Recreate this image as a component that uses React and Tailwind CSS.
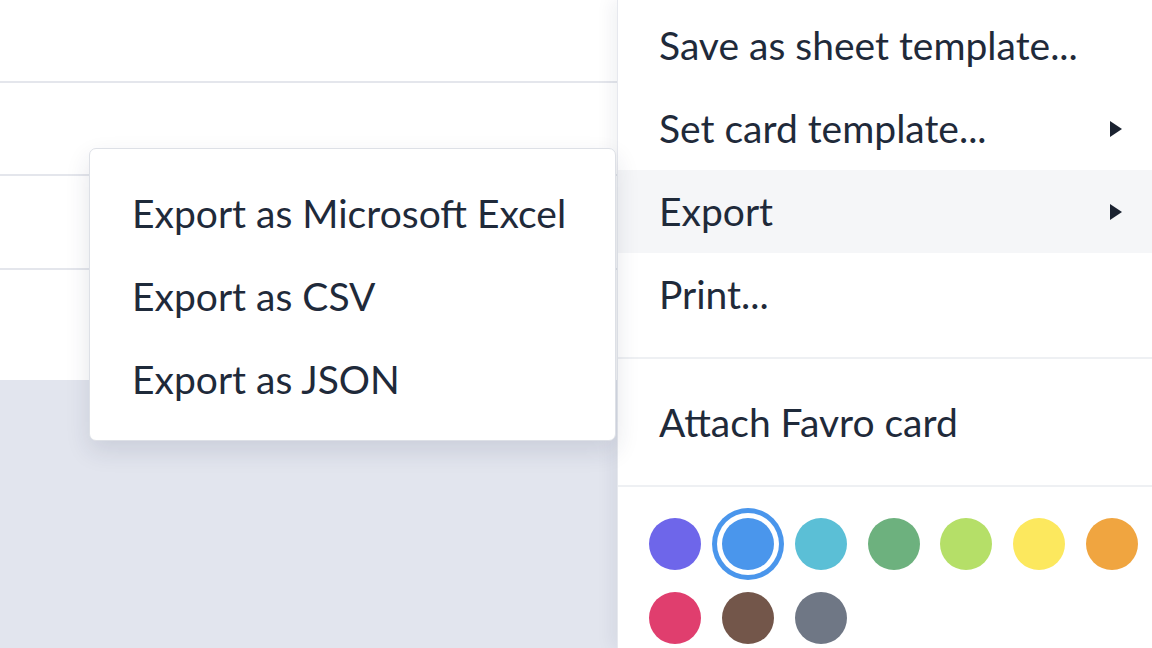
const colors = [
  "bg-[#6e66ea]",
  "bg-[#4a96ec]",
  "bg-[#5bbfd6]",
  "bg-[#6db17e]",
  "bg-[#b5df68]",
  "bg-[#fce85e]",
  "bg-[#f0a540]",
  "bg-[#e03e6e]",
  "bg-[#73564a]",
  "bg-[#6f7785]",
];

function Arrow() {
  return (
    <svg width="16" height="20" viewBox="0 0 16 20" className="mr-[28px]">
      <path d="M2 2 L14 10 L2 18 Z" fill="#1a2230" />
    </svg>
  );
}

function MenuItem({ label, arrow, active }) {
  return (
    <div
      className={`flex items-center justify-between h-[83px] pl-[41px] ${
        active ? "bg-[#f5f6f8]" : ""
      }`}
    >
      <span>{label}</span>
      {arrow && <Arrow />}
    </div>
  );
}

export default function App() {
  return (
    <div
      className="relative flex w-[1152px] h-[648px] overflow-hidden bg-[#e2e5ee] text-[#1f2a3a] text-[39px] leading-none"
      style={{ fontFamily: "Lato, 'Noto Sans', sans-serif" }}
    >
      {/* sheet rows behind */}
      <div className="flex-1 flex flex-col">
        <div className="h-[83px] bg-white border-b-2 border-[#e4e6ec]" />
        <div className="h-[93px] bg-white border-b-2 border-[#e4e6ec]" />
        <div className="h-[94px] bg-white border-b-2 border-[#e4e6ec]" />
        <div className="h-[110px] bg-white" />
      </div>

      {/* main context menu */}
      <div className="w-[535px] h-full bg-white border-l border-[#e6e8ee] shadow-[-6px_0_16px_rgba(20,30,60,0.06)] flex flex-col">
        <div className="pt-[4px]">
          <MenuItem label="Save as sheet template..." />
          <MenuItem label="Set card template..." arrow />
          <MenuItem label="Export" arrow active />
          <MenuItem label="Print..." />
        </div>
        <div className="mt-[21px] border-t-2 border-[#eef0f3]" />
        <div className="h-[126px] flex items-center pl-[41px]">Attach Favro card</div>
        <div className="border-t-2 border-[#eef0f3]" />
        <div className="grid grid-cols-7 gap-x-[21px] gap-y-[22px] pl-[31px] pt-[31px] w-[520px]">
          {colors.map((c, i) => (
            <div
              key={i}
              className={`w-[52px] h-[52px] rounded-full ${c} ${
                i === 1 ? "shadow-[0_0_0_5px_#fff,0_0_0_10px_#4a96ec]" : ""
              }`}
            />
          ))}
        </div>
      </div>

      {/* export submenu */}
      <div className="absolute left-[89px] top-[148px] w-[527px] h-[293px] bg-white rounded-[7px] border border-[#dde0e6] shadow-[0_10px_24px_rgba(30,40,70,0.12)] pt-[23px]">
        {["Export as Microsoft Excel", "Export as CSV", "Export as JSON"].map((t) => (
          <div key={t} className="h-[83px] flex items-center pl-[42px]">
            {t}
          </div>
        ))}
      </div>
    </div>
  );
}
